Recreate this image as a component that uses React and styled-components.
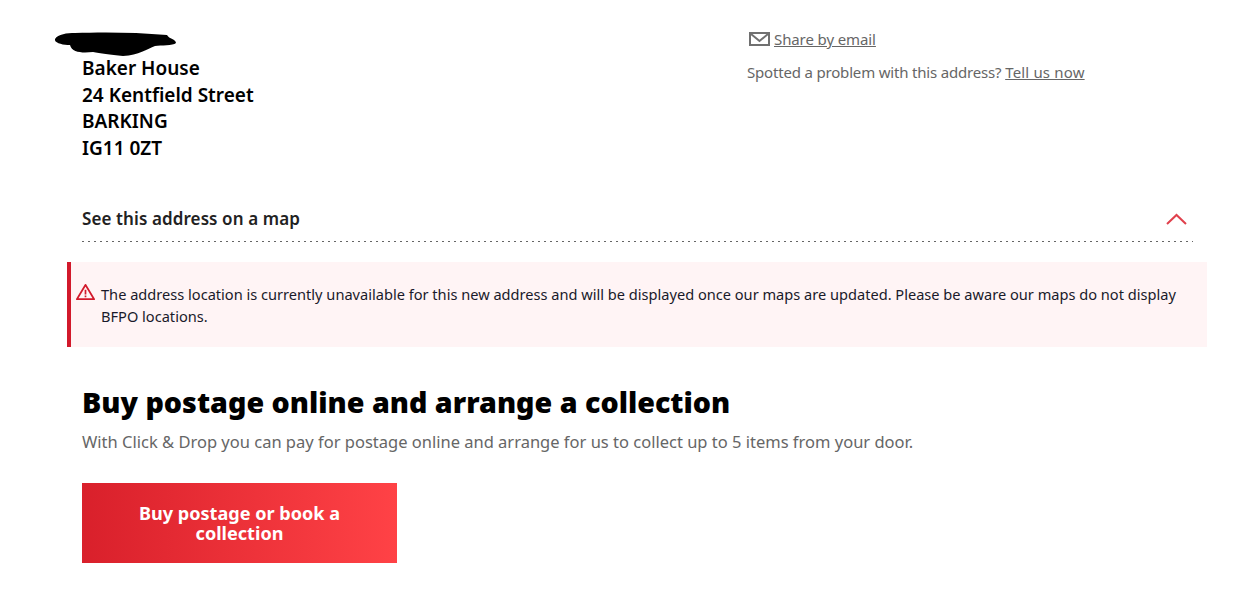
import styled, { createGlobalStyle } from "styled-components";

const GlobalStyle = createGlobalStyle`
    html, body {
        margin: 0;
        padding: 0;
        background: #fff;
    }
    body {
        font-family: "Noto Sans", "Open Sans", Arial, sans-serif;
    }
`;

export default function App() {
    return (
        <>
            <GlobalStyle />
            <Page>
                <Top>
                    <Address>
                        <Scribble viewBox="0 0 122 25">
                            <path d="M0 8 C3 3 12 2 20 2 C45 1 80 1 112 4 C114 8 121 8 121 12 C118 15 106 14 100 15 C92 18 84 24 68 25 C55 24 45 22 38 21 C28 22 17 22 15 14 C8 14 -1 12 0 8 Z" fill="#000" />
                        </Scribble>
                        <Line>Baker House</Line>
                        <Line>24 Kentfield Street</Line>
                        <Line>BARKING</Line>
                        <Line>IG11 0ZT</Line>
                    </Address>
                    <Aside>
                        <Share>
                            <svg width="21" height="14" viewBox="0 0 21 14" fill="none" stroke="#707070">
                                <rect x="1" y="1" width="19" height="12" strokeWidth="2" />
                                <path d="M2 2 L10.5 9 L19 2" strokeWidth="2" />
                            </svg>
                            <TextLink href="#">Share by email</TextLink>
                        </Share>
                        <Problem>
                            Spotted a problem with this address? <TextLink href="#" $wide>Tell us now</TextLink>
                        </Problem>
                    </Aside>
                </Top>

                <MapToggle>
                    <MapLabel>See this address on a map</MapLabel>
                    <svg width="21" height="12" viewBox="0 0 21 12" fill="none" stroke="#e0404c" strokeWidth="2">
                        <path d="M1 11 L10.5 2 L20 11" />
                    </svg>
                </MapToggle>

                <Alert>
                    <AlertIcon viewBox="0 0 20 18">
                        <path d="M10 1.5 L19 16.5 H1 Z" fill="none" stroke="#d2192b" strokeWidth="2" strokeLinejoin="round" />
                        <path d="M10 6.5 V11.5 M10 12.8 V14.4" stroke="#d2192b" strokeWidth="1.8" />
                    </AlertIcon>
                    <AlertText>
                        The address location is currently unavailable for this new address and will be displayed once our maps are updated. Please be aware our maps do not display BFPO locations.
                    </AlertText>
                </Alert>

                <Promo>
                    <Heading>Buy postage online and arrange a collection</Heading>
                    <Sub>With Click &amp; Drop you can pay for postage online and arrange for us to collect up to 5 items from your door.</Sub>
                    <BuyButton>Buy postage or book a collection</BuyButton>
                </Promo>
            </Page>
        </>
    );
}

const Page = styled.div`
    width: 1140px;
    margin-left: 67px;
    height: 591px;
`;

const Top = styled.div`
    display: flex;
    padding: 31px 0 0 15px;
`;

const Address = styled.div`
    width: 665px;
    display: flex;
    flex-direction: column;
`;

const Scribble = styled.svg`
    width: 122px;
    height: 25px;
    margin: 0 0 -1px -27px;
`;

const Line = styled.div`
    font-size: 19px;
    font-weight: 600;
    line-height: 26.7px;
    color: #000;
`;

const Aside = styled.div`
    display: flex;
    flex-direction: column;
    gap: 12px;
    margin-top: -2px;
    color: #666;
    font-size: 15px;
    letter-spacing: -0.1px;
`;

const Share = styled.div`
    display: flex;
    align-items: center;
    gap: 4px;
    margin-left: 2px;
    line-height: 20px;
`;

const Problem = styled.div`
    line-height: 22px;
    letter-spacing: -0.18px;
`;

const TextLink = styled.a`
    color: #666;
    text-decoration: underline;
    letter-spacing: ${props => (props.$wide ? "0.17px" : "inherit")};
`;

const MapToggle = styled.div`
    display: flex;
    justify-content: space-between;
    align-items: center;
    margin: 39px 14px 0 15px;
    height: 36px;
    padding-right: 6px;
    padding-bottom: 5px;
    background: linear-gradient(90deg, #666 2px, transparent 2px) left bottom / 6px 1px repeat-x;
    box-sizing: content-box;
`;

const MapLabel = styled.div`
    font-size: 17px;
    font-weight: 600;
    letter-spacing: 0.1px;
    color: #222;
`;

const Alert = styled.div`
    display: flex;
    margin-top: 20px;
    height: 85px;
    box-sizing: border-box;
    padding: 21px 28px 0 5px;
    gap: 6px;
    background: #fff4f5;
    border-left: 4px solid #d2192b;
`;

const AlertIcon = styled.svg`
    flex: none;
    width: 19px;
    height: 18px;
`;

const AlertText = styled.div`
    font-size: 14.6px;
    line-height: 22px;
    color: #1a1a2a;
`;

const Promo = styled.div`
    padding: 35px 0 0 15px;
`;

const Heading = styled.h2`
    margin: 0;
    font-size: 28.67px;
    line-height: 40px;
    font-weight: 900;
    color: #000;
`;

const Sub = styled.p`
    margin: 8px 0 0;
    font-size: 16.5px;
    line-height: 24px;
    color: #666;
`;

const BuyButton = styled.button`
    display: block;
    margin-top: 29px;
    width: 315px;
    height: 80px;
    padding: 0 40px;
    border: 0;
    background: linear-gradient(90deg, #d9202b, #ff4246);
    color: #fff;
    font-family: inherit;
    font-size: 18.1px;
    font-weight: 700;
    line-height: 20px;
`;
